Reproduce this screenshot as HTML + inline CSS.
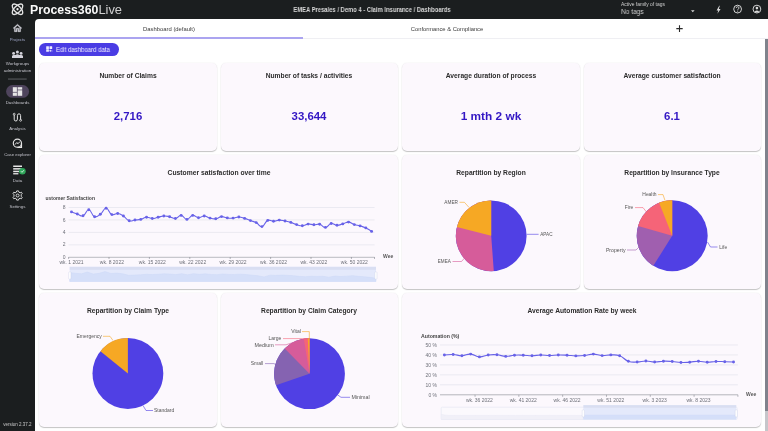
<!DOCTYPE html>
<html><head><meta charset="utf-8"><style>
html,body{margin:0;padding:0;}
body{width:768px;height:431px;overflow:hidden;position:relative;background:#1b1e1f;font-family:'Liberation Sans',sans-serif;}
.abs{position:absolute;}
.t{position:absolute;text-align:center;white-space:nowrap;line-height:1.1;}
.t,.abs{will-change:transform;}
.card{position:absolute;background:#fcf8fd;border-radius:5px;box-shadow:0 1px 1px 0 rgba(0,0,0,0.22),0 0 1.5px 0 rgba(0,0,0,0.10);}
svg text{font-family:'Liberation Sans',sans-serif;}
</style></head><body>

<svg class="abs" style="left:10px;top:2px" width="15" height="15" viewBox="0 0 15 15">
 <g fill="none" stroke="#e4e4e4" stroke-width="1.35">
  <ellipse cx="7.5" cy="7.25" rx="6.7" ry="3.2" transform="rotate(45 7.5 7.25)"/>
  <ellipse cx="7.5" cy="7.25" rx="6.7" ry="3.2" transform="rotate(-45 7.5 7.25)"/>
 </g>
 <circle cx="7.5" cy="7.25" r="1.15" fill="#f0f0f0"/>
</svg>
<div class="abs" style="left:30px;top:3.1px;font-size:12.3px;color:#fafafa;white-space:nowrap;line-height:14px"><b>Process360</b><span style="color:#cfcfcf;font-size:12.9px">Live</span></div>
<div class="t" style="left:222px;top:6.3px;width:300px;font-size:7.0px;color:#d8d8d8;font-weight:bold;transform:scaleX(0.835);transform-origin:150px 0">EMEA Presales / Demo 4 - Claim Insurance / Dashboards</div>
<div class="abs" style="left:620.8px;top:2.4px;font-size:4.95px;color:#cfcfcf;white-space:nowrap">Active family of tags</div>
<div class="abs" style="left:620.8px;top:7.0px;font-size:7.2px;color:#cfcfcf;white-space:nowrap;transform:scaleX(0.91);transform-origin:0 0">No tags</div>
<svg class="abs" style="left:690px;top:9px" width="8" height="5"><path d="M1.0,1.2 L4.6,1.2 L2.8,3.3Z" fill="#d8d8d8"/></svg>
<svg class="abs" style="left:714px;top:4px" width="50" height="12" viewBox="0 0 50 12">
 <path d="M5.2,1.8 L2.6,6.6 L4.3,6.6 L3.4,9.8 L6.6,4.9 L4.8,4.9 L5.8,1.8Z" fill="#dcdcdc"/>
 <circle cx="23.6" cy="5.1" r="3.9" fill="none" stroke="#dcdcdc" stroke-width="0.95"/>
 <path d="M22.2,4.1 Q22.2,2.7 23.6,2.7 Q25,2.7 25,4 Q25,4.9 23.7,5.6 L23.7,6.4" fill="none" stroke="#dcdcdc" stroke-width="0.85"/>
 <circle cx="23.7" cy="7.7" r="0.5" fill="#dcdcdc"/>
 <circle cx="42.9" cy="5.1" r="3.9" fill="none" stroke="#dcdcdc" stroke-width="0.95"/>
 <circle cx="42.9" cy="4.1" r="1.3" fill="#dcdcdc"/>
 <path d="M40.6,7.6 Q42.9,5.3 45.2,7.6 Q42.9,9.4 40.6,7.6Z" fill="#dcdcdc"/>
</svg>

<div class="side">
<svg class="abs" style="left:0;top:0" width="35" height="431" viewBox="0 0 35 431">
 <g fill="#e6e6e6">
  <!-- home -->
  <path transform="translate(12.2,22.9) scale(0.44)" d="M12 5.69l5 4.5V18h-2v-6H9v6H7v-7.81l5-4.5M12 3L2 12h3v8h6v-6h2v6h6v-8h3L12 3z" fill="#d2d2da" stroke="#d2d2da" stroke-width="0.9" stroke-linejoin="round"/>
  <!-- groups -->
  <circle cx="13.6" cy="53.4" r="1.45" fill="#d4d4dc"/><circle cx="17.4" cy="51.9" r="1.5" fill="#d4d4dc"/><circle cx="21.1" cy="53.4" r="1.45" fill="#d4d4dc"/>
  <path d="M12,58 L12,56.2 Q12,55 13.4,54.9 L15.6,54.9 Q16.2,54.3 17.4,54.2 Q18.6,54.3 19.2,54.9 L21.5,54.9 Q23,55 23,56.2 L23,58 Z" fill="#d4d4dc"/>
 </g>
 <rect x="8" y="78.6" width="18.7" height="0.9" fill="#65676c"/>
 <rect x="6.1" y="85.1" width="23" height="12.7" rx="6.35" fill="#4e445c"/>
 <g fill="#e6e6e6">
  <rect x="12.8" y="87.2" width="4.1" height="4.7"/><rect x="17.6" y="87.2" width="4.6" height="2.4"/>
  <rect x="12.8" y="92.6" width="4.1" height="3.2"/><rect x="17.6" y="90.3" width="4.6" height="5.5"/>
 </g>
 <!-- analysis -->
 <path d="M14.2,114.9 L14.2,119.2 Q14.2,121 15.8,121 Q17.4,121 17.4,119.2 L17.4,115.6 Q17.4,113.8 19,113.8 Q20.6,113.8 20.6,115.6 L20.6,119.6" fill="none" stroke="#e6e6e6" stroke-width="1.0"/>
 <circle cx="14.2" cy="114.2" r="0.95" fill="none" stroke="#e6e6e6" stroke-width="0.8"/><circle cx="20.6" cy="120.3" r="0.95" fill="none" stroke="#e6e6e6" stroke-width="0.8"/>
 <!-- case explorer -->
 <circle cx="17.4" cy="143.2" r="4.1" fill="none" stroke="#e6e6e6" stroke-width="1.15"/>
 <path d="M15.0,144.6 L16.7,142.6 L18.1,143.7 L19.9,141.6" fill="none" stroke="#e6e6e6" stroke-width="1.0"/>
 <path d="M17.4,147.3 L21.5,147.3 L21.5,143.2" fill="none" stroke="#e6e6e6" stroke-width="1.15"/>
 <!-- data -->
 <g fill="#e6e6e6">
  <rect x="13.2" y="165.5" width="8.8" height="1.5"/><rect x="13.2" y="168.1" width="8.8" height="1.5"/>
  <rect x="13.2" y="170.7" width="5.8" height="1.5"/><rect x="13.2" y="173.1" width="5.2" height="1.3"/>
 </g>
 <circle cx="22.4" cy="171.2" r="3.3" fill="#2fa65a"/>
 <path d="M20.9,171.2 L22.0,172.3 L23.9,170.2" fill="none" stroke="#fff" stroke-width="0.75"/>
 <!-- settings -->
 <g transform="translate(17.6,195.5)">
  <path d="M-0.9,-4.6 L0.9,-4.6 L1.3,-3.3 L2.5,-2.7 L3.8,-3.3 L4.6,-1.8 L3.6,-0.8 L3.6,0.8 L4.6,1.8 L3.8,3.3 L2.5,2.7 L1.3,3.3 L0.9,4.6 L-0.9,4.6 L-1.3,3.3 L-2.5,2.7 L-3.8,3.3 L-4.6,1.8 L-3.6,0.8 L-3.6,-0.8 L-4.6,-1.8 L-3.8,-3.3 L-2.5,-2.7 L-1.3,-3.3 Z" fill="none" stroke="#e6e6e6" stroke-width="0.9" stroke-linejoin="round"/>
  <circle r="1.5" fill="none" stroke="#e6e6e6" stroke-width="0.9"/>
 </g>
</svg>
<div class="t" style="left:0;top:38.3px;width:35px;font-size:4.3px;color:#a0a8c8">Projects</div>
<div class="t" style="left:0;top:60.9px;width:35px;font-size:4.4px;color:#c4c4cc;line-height:6.7px">Workgroups<br>administration</div>
<div class="t" style="left:0;top:100.8px;width:35px;font-size:4.4px;color:#c4c4cc">Dashboards</div>
<div class="t" style="left:0;top:127.2px;width:35px;font-size:4.4px;color:#c4c4cc">Analysis</div>
<div class="t" style="left:0;top:153.2px;width:35px;font-size:4.3px;color:#c4c4cc">Case explorer</div>
<div class="t" style="left:0;top:179.4px;width:35px;font-size:4.4px;color:#c4c4cc">Data</div>
<div class="t" style="left:0;top:205.0px;width:35px;font-size:4.4px;color:#c4c4cc">Settings</div>
<div class="t" style="left:0;top:423.2px;width:35px;font-size:4.5px;color:#c8c8c8">version 2.37.2</div>
</div>


<div class="abs" style="left:35px;top:19px;width:733px;height:412px;background:#fff;border-top-left-radius:4px"></div>
<div class="abs" style="left:35px;top:38px;width:733px;height:1px;background:#efeff3"></div>
<div class="abs" style="left:35px;top:37px;width:268px;height:2px;background:#aba4f0"></div>
<div class="t" style="left:69px;top:25.6px;width:200px;font-size:5.86px;color:#3a3a3a">Dashboard (default)</div>
<div class="t" style="left:346.5px;top:25.6px;width:200px;font-size:5.81px;color:#3a3a3a">Conformance &amp; Compliance</div>
<svg class="abs" style="left:675px;top:24px" width="9" height="9"><path d="M4.5,1.3 V7.9 M1.3,4.6 H7.7" stroke="#2a2a2a" stroke-width="1.1"/></svg>
<div class="abs" style="left:765px;top:39px;width:3px;height:372px;background:#80838c"></div>
<div class="abs" style="left:765px;top:411px;width:3px;height:20px;background:#c6c6ca"></div>
<div class="abs" style="left:39px;top:43px;width:80px;height:12.8px;border-radius:6.4px;background:#4a3ce4"></div>
<svg class="abs" style="left:45.8px;top:46px" width="7" height="7" viewBox="0 0 7 7" fill="#ecebff">
 <rect x="0.2" y="0.3" width="2.7" height="2.7" rx="0.3"/><rect x="3.5" y="0.3" width="2.7" height="2.7" rx="0.3"/>
 <rect x="0.2" y="3.3" width="2.7" height="2.5" rx="0.3"/><rect x="3.9" y="3.7" width="0.8" height="2.1"/><rect x="3.3" y="4.35" width="2.1" height="0.8"/><rect x="5.6" y="4.6" width="0.8" height="0.8"/>
</svg>
<div class="abs" style="left:56px;top:46.0px;font-size:6.5px;color:#f2f0ff;white-space:nowrap;transform:scaleX(0.925);transform-origin:0 0">Edit dashboard data</div>

<div class="card" style="left:39px;top:63px;width:177.5px;height:88px"></div><div class="card" style="left:220.5px;top:63px;width:177.5px;height:88px"></div><div class="card" style="left:402px;top:63px;width:177.5px;height:88px"></div><div class="card" style="left:583.5px;top:63px;width:177.5px;height:88px"></div><div class="card" style="left:39px;top:154.5px;width:359px;height:134.5px"></div><div class="card" style="left:402px;top:154.5px;width:177.5px;height:134.5px"></div><div class="card" style="left:583.5px;top:154.5px;width:177.5px;height:134.5px"></div><div class="card" style="left:39px;top:292.5px;width:177.5px;height:134.5px"></div><div class="card" style="left:220.5px;top:292.5px;width:177.5px;height:134.5px"></div><div class="card" style="left:402px;top:292.5px;width:359px;height:134.5px"></div>
<div class="t" style="left:-22.25px;top:71.64px;width:300px;font-size:6.7px;color:#2c2c2c;font-weight:bold;">Number of Claims</div><div class="t" style="left:-22.25px;top:109.58px;width:300px;font-size:11.4px;color:#3317c4;font-weight:bold;">2,716</div><div class="t" style="left:159.25px;top:71.64px;width:300px;font-size:6.7px;color:#2c2c2c;font-weight:bold;">Number of tasks / activities</div><div class="t" style="left:159.25px;top:109.58px;width:300px;font-size:11.4px;color:#3317c4;font-weight:bold;">33,644</div><div class="t" style="left:340.75px;top:71.64px;width:300px;font-size:6.7px;color:#2c2c2c;font-weight:bold;">Average duration of process</div><div class="t" style="left:340.75px;top:109.58px;width:300px;font-size:11.4px;color:#3317c4;font-weight:bold;transform:scaleX(1.04);transform-origin:150px 0">1 mth 2 wk</div><div class="t" style="left:522.25px;top:71.64px;width:300px;font-size:6.7px;color:#2c2c2c;font-weight:bold;">Average customer satisfaction</div><div class="t" style="left:522.25px;top:109.58px;width:300px;font-size:11.4px;color:#3317c4;font-weight:bold;">6.1</div><div class="t" style="left:68.5px;top:169.09px;width:300px;font-size:6.75px;color:#2c2c2c;font-weight:bold;">Customer satisfaction over time</div><div class="t" style="left:340.75px;top:169.14px;width:300px;font-size:6.7px;color:#2c2c2c;font-weight:bold;">Repartition by Region</div><div class="t" style="left:522.25px;top:169.14px;width:300px;font-size:6.7px;color:#2c2c2c;font-weight:bold;">Repartition by Insurance Type</div><div class="t" style="left:-22.25px;top:306.94px;width:300px;font-size:6.7px;color:#2c2c2c;font-weight:bold;">Repartition by Claim Type</div><div class="t" style="left:159.25px;top:306.94px;width:300px;font-size:6.7px;color:#2c2c2c;font-weight:bold;">Repartition by Claim Category</div><div class="t" style="left:431.5px;top:306.94px;width:300px;font-size:6.7px;color:#2c2c2c;font-weight:bold;">Average Automation Rate by week</div>
<svg class="abs" style="left:0;top:0" width="768" height="431" viewBox="0 0 768 431">
<circle cx="491.2" cy="235.8" r="35.4" fill="#5040e4"/><path d="M491.20,235.80 L493.79,271.10 A35.4,35.4 0 1 1 491.20,200.40 Z" fill="#d65c9a"/><path d="M491.20,235.80 L456.90,227.06 A35.4,35.4 0 0 1 491.20,200.40 Z" fill="#f6a824"/>
<polyline points="526.6,234.3 538.6,234.3" stroke="#5040e4" fill="none" stroke-width="0.6"/>
<text x="540.30" y="236.00" font-size="4.6" fill="#555" font-weight="normal" text-anchor="start" >APAC</text>
<polyline points="469,207.4 464.4,202.3 459.5,202.3" stroke="#f6a824" fill="none" stroke-width="0.6"/>
<text x="457.90" y="204.00" font-size="4.7" fill="#555" font-weight="normal" text-anchor="end" >AMER</text>
<polyline points="465,257.5 461.5,261.5 452.5,261.5" stroke="#d65c9a" fill="none" stroke-width="0.6"/>
<text x="450.80" y="263.20" font-size="4.6" fill="#555" font-weight="normal" text-anchor="end" >EMEA</text>
<circle cx="672.2" cy="235.8" r="35.5" fill="#5040e4"/><path d="M672.20,235.80 L653.34,265.87 A35.5,35.5 0 0 1 672.20,200.30 Z" fill="#a05faf"/><path d="M672.20,235.80 L638.08,226.01 A35.5,35.5 0 0 1 672.20,200.30 Z" fill="#f56478"/><path d="M672.20,235.80 L659.13,202.79 A35.5,35.5 0 0 1 672.20,200.30 Z" fill="#f6a824"/>
<polyline points="707.5,242 710.5,247 717.5,247" stroke="#5040e4" fill="none" stroke-width="0.6"/>
<text x="719.30" y="248.70" font-size="4.9" fill="#555" font-weight="normal" text-anchor="start" >Life</text>
<polyline points="640,246 636,250 627,250" stroke="#a05faf" fill="none" stroke-width="0.6"/>
<text x="625.50" y="251.70" font-size="5.2" fill="#555" font-weight="normal" text-anchor="end" >Property</text>
<polyline points="646.5,212 643,207.6 635,207.6" stroke="#f56478" fill="none" stroke-width="0.6"/>
<text x="633.30" y="209.30" font-size="4.9" fill="#555" font-weight="normal" text-anchor="end" >Fire</text>
<polyline points="665,200.5 663,194.6 658,194.6" stroke="#f6a824" fill="none" stroke-width="0.6"/>
<text x="656.50" y="196.30" font-size="4.9" fill="#555" font-weight="normal" text-anchor="end" >Health</text>
<circle cx="127.9" cy="373.5" r="35.4" fill="#5040e4"/><path d="M127.90,373.50 L100.43,351.17 A35.4,35.4 0 0 1 127.90,338.10 Z" fill="#f6a824"/>
<polyline points="143,405.5 146,410.5 153,410.5" stroke="#5040e4" fill="none" stroke-width="0.6"/>
<text x="154.00" y="412.20" font-size="5.0" fill="#555" font-weight="normal" text-anchor="start" >Standard</text>
<polyline points="113,340.5 110,336.3 103,336.3" stroke="#f6a824" fill="none" stroke-width="0.6"/>
<text x="101.80" y="338.00" font-size="5.0" fill="#555" font-weight="normal" text-anchor="end" >Emergency</text>
<circle cx="309.5" cy="373.7" r="35.4" fill="#5040e4"/><path d="M309.50,373.70 L276.03,385.23 A35.4,35.4 0 0 1 309.50,338.30 Z" fill="#8563b1"/><path d="M309.50,373.70 L284.73,348.41 A35.4,35.4 0 0 1 309.50,338.30 Z" fill="#d65c9a"/><path d="M309.50,373.70 L303.84,338.76 A35.4,35.4 0 0 1 309.50,338.30 Z" fill="#f56478"/><path d="M309.50,373.70 L307.77,338.34 A35.4,35.4 0 0 1 309.50,338.30 Z" fill="#f6a824"/>
<polyline points="335,393 341,397.3 350,397.3" stroke="#5040e4" fill="none" stroke-width="0.6"/>
<text x="351.40" y="399.00" font-size="5.3" fill="#555" font-weight="normal" text-anchor="start" >Minimal</text>
<polyline points="279,366.5 274,363.6 265,363.6" stroke="#8563b1" fill="none" stroke-width="0.6"/>
<text x="263.20" y="365.30" font-size="5.0" fill="#555" font-weight="normal" text-anchor="end" >Small</text>
<polyline points="296,341.5 286,344.8 275,344.8" stroke="#d65c9a" fill="none" stroke-width="0.6"/>
<text x="273.70" y="346.50" font-size="5.4" fill="#555" font-weight="normal" text-anchor="end" >Medium</text>
<polyline points="307.5,338.6 283,338.6" stroke="#f56478" fill="none" stroke-width="0.6"/>
<text x="281.30" y="340.30" font-size="5.0" fill="#555" font-weight="normal" text-anchor="end" >Large</text>
<polyline points="309.3,338.6 309.3,331.6 302,331.6" stroke="#f6a824" fill="none" stroke-width="0.6"/>
<text x="300.80" y="333.30" font-size="5.0" fill="#555" font-weight="normal" text-anchor="end" >Vital</text>
<line x1="68.6" y1="207.5" x2="374.5" y2="207.5" stroke="#e4e4ec" stroke-width="0.7"/>
<line x1="68.6" y1="219.95" x2="374.5" y2="219.95" stroke="#e4e4ec" stroke-width="0.7"/>
<line x1="68.6" y1="232.4" x2="374.5" y2="232.4" stroke="#e4e4ec" stroke-width="0.7"/>
<line x1="68.6" y1="244.85" x2="374.5" y2="244.85" stroke="#e4e4ec" stroke-width="0.7"/>
<line x1="68.6" y1="257.3" x2="374.5" y2="257.3" stroke="#85878f" stroke-width="0.55"/>
<text x="65.50" y="258.80" font-size="5.0" fill="#6e7079" font-weight="normal" text-anchor="end" >0</text>
<text x="65.50" y="246.38" font-size="5.0" fill="#6e7079" font-weight="normal" text-anchor="end" >2</text>
<text x="65.50" y="233.96" font-size="5.0" fill="#6e7079" font-weight="normal" text-anchor="end" >4</text>
<text x="65.50" y="221.54" font-size="5.0" fill="#6e7079" font-weight="normal" text-anchor="end" >6</text>
<text x="65.50" y="209.12" font-size="5.0" fill="#6e7079" font-weight="normal" text-anchor="end" >8</text>
<line x1="68.60" y1="257" x2="68.60" y2="259" stroke="#85878f" stroke-width="0.6"/>
<text x="71.49" y="263.80" font-size="5.0" fill="#6e7079" font-weight="normal" text-anchor="middle" >wk. 1 2021</text>
<line x1="109.00" y1="257" x2="109.00" y2="259" stroke="#85878f" stroke-width="0.6"/>
<text x="111.89" y="263.80" font-size="5.0" fill="#6e7079" font-weight="normal" text-anchor="middle" >wk. 8 2022</text>
<line x1="149.40" y1="257" x2="149.40" y2="259" stroke="#85878f" stroke-width="0.6"/>
<text x="152.29" y="263.80" font-size="5.0" fill="#6e7079" font-weight="normal" text-anchor="middle" >wk. 15 2022</text>
<line x1="189.81" y1="257" x2="189.81" y2="259" stroke="#85878f" stroke-width="0.6"/>
<text x="192.69" y="263.80" font-size="5.0" fill="#6e7079" font-weight="normal" text-anchor="middle" >wk. 22 2022</text>
<line x1="230.21" y1="257" x2="230.21" y2="259" stroke="#85878f" stroke-width="0.6"/>
<text x="233.09" y="263.80" font-size="5.0" fill="#6e7079" font-weight="normal" text-anchor="middle" >wk. 29 2022</text>
<line x1="270.61" y1="257" x2="270.61" y2="259" stroke="#85878f" stroke-width="0.6"/>
<text x="273.50" y="263.80" font-size="5.0" fill="#6e7079" font-weight="normal" text-anchor="middle" >wk. 36 2022</text>
<line x1="311.01" y1="257" x2="311.01" y2="259" stroke="#85878f" stroke-width="0.6"/>
<text x="313.90" y="263.80" font-size="5.0" fill="#6e7079" font-weight="normal" text-anchor="middle" >wk. 43 2022</text>
<line x1="351.41" y1="257" x2="351.41" y2="259" stroke="#85878f" stroke-width="0.6"/>
<text x="354.30" y="263.80" font-size="5.0" fill="#6e7079" font-weight="normal" text-anchor="middle" >wk. 50 2022</text>
<line x1="374.5" y1="257" x2="374.5" y2="259" stroke="#85878f" stroke-width="0.6"/>
<path d="M71.49,211.90 C71.49,211.90 74.35,213.02 77.26,214.00 C80.12,214.97 80.60,216.68 83.03,215.80 C86.37,214.58 86.03,209.58 88.80,209.80 C91.80,210.03 91.18,215.41 94.57,216.70 C96.95,217.61 97.85,216.02 100.34,214.20 C103.62,211.82 103.28,208.20 106.12,208.30 C109.05,208.40 108.47,213.06 111.89,214.60 C114.24,215.66 114.87,213.16 117.66,213.50 C120.64,213.86 120.80,214.34 123.43,216.00 C126.57,217.99 125.95,219.67 129.20,220.80 C131.73,221.67 132.08,220.35 134.97,220.00 C137.85,219.65 137.94,220.06 140.75,219.40 C143.71,218.71 143.57,217.53 146.52,217.30 C149.34,217.08 149.40,218.50 152.29,218.50 C155.18,218.50 155.18,217.92 158.06,217.30 C160.95,216.67 160.92,216.15 163.83,216.00 C166.69,215.85 166.78,216.09 169.60,216.70 C172.55,217.34 172.61,218.81 175.38,218.50 C178.38,218.16 178.36,215.18 181.15,215.40 C184.13,215.63 184.03,219.40 186.92,219.40 C189.81,219.40 189.63,215.85 192.69,215.40 C195.40,215.00 195.53,217.55 198.46,217.70 C201.30,217.85 201.38,215.90 204.23,216.00 C207.15,216.10 207.04,217.38 210.01,218.10 C212.81,218.78 212.98,219.16 215.78,218.80 C218.75,218.41 218.60,216.83 221.55,216.60 C224.37,216.38 224.40,217.52 227.32,217.90 C230.17,218.27 230.23,218.32 233.09,218.10 C236.00,217.87 235.99,216.93 238.87,217.00 C241.77,217.08 241.81,217.52 244.64,218.40 C247.58,219.32 247.51,219.54 250.41,220.60 C253.28,221.64 253.50,221.20 256.18,222.60 C259.27,224.20 259.34,227.10 261.95,226.60 C265.11,226.00 264.30,222.00 267.72,220.40 C270.08,219.30 270.62,221.27 273.50,221.20 C276.39,221.12 276.37,220.15 279.27,220.10 C282.14,220.05 282.18,220.43 285.04,221.00 C287.95,221.58 287.98,221.52 290.81,222.40 C293.75,223.32 293.62,223.75 296.58,224.60 C299.40,225.40 299.50,225.82 302.35,225.70 C305.27,225.57 305.20,224.33 308.13,224.10 C310.97,223.88 311.01,224.75 313.90,224.80 C316.78,224.85 316.96,223.69 319.67,224.30 C322.73,224.99 322.64,227.59 325.44,227.40 C328.41,227.19 328.12,224.09 331.21,223.50 C333.89,222.99 334.07,225.10 336.98,225.20 C339.85,225.30 339.90,224.67 342.76,223.90 C345.67,223.12 345.70,221.93 348.53,222.10 C351.47,222.28 351.32,223.62 354.30,224.60 C357.10,225.52 357.23,225.09 360.07,225.90 C363.00,226.74 363.10,226.59 365.84,227.90 C368.87,229.34 371.61,231.40 371.61,231.40" fill="none" stroke="#6862e8" stroke-width="1.1" stroke-linejoin="round"/>
<circle cx="71.49" cy="211.90" r="1.45" fill="#6862e8"/>
<circle cx="77.26" cy="214.00" r="1.45" fill="#6862e8"/>
<circle cx="83.03" cy="215.80" r="1.45" fill="#6862e8"/>
<circle cx="88.80" cy="209.80" r="1.45" fill="#6862e8"/>
<circle cx="94.57" cy="216.70" r="1.45" fill="#6862e8"/>
<circle cx="100.34" cy="214.20" r="1.45" fill="#6862e8"/>
<circle cx="106.12" cy="208.30" r="1.45" fill="#6862e8"/>
<circle cx="111.89" cy="214.60" r="1.45" fill="#6862e8"/>
<circle cx="117.66" cy="213.50" r="1.45" fill="#6862e8"/>
<circle cx="123.43" cy="216.00" r="1.45" fill="#6862e8"/>
<circle cx="129.20" cy="220.80" r="1.45" fill="#6862e8"/>
<circle cx="134.97" cy="220.00" r="1.45" fill="#6862e8"/>
<circle cx="140.75" cy="219.40" r="1.45" fill="#6862e8"/>
<circle cx="146.52" cy="217.30" r="1.45" fill="#6862e8"/>
<circle cx="152.29" cy="218.50" r="1.45" fill="#6862e8"/>
<circle cx="158.06" cy="217.30" r="1.45" fill="#6862e8"/>
<circle cx="163.83" cy="216.00" r="1.45" fill="#6862e8"/>
<circle cx="169.60" cy="216.70" r="1.45" fill="#6862e8"/>
<circle cx="175.38" cy="218.50" r="1.45" fill="#6862e8"/>
<circle cx="181.15" cy="215.40" r="1.45" fill="#6862e8"/>
<circle cx="186.92" cy="219.40" r="1.45" fill="#6862e8"/>
<circle cx="192.69" cy="215.40" r="1.45" fill="#6862e8"/>
<circle cx="198.46" cy="217.70" r="1.45" fill="#6862e8"/>
<circle cx="204.23" cy="216.00" r="1.45" fill="#6862e8"/>
<circle cx="210.01" cy="218.10" r="1.45" fill="#6862e8"/>
<circle cx="215.78" cy="218.80" r="1.45" fill="#6862e8"/>
<circle cx="221.55" cy="216.60" r="1.45" fill="#6862e8"/>
<circle cx="227.32" cy="217.90" r="1.45" fill="#6862e8"/>
<circle cx="233.09" cy="218.10" r="1.45" fill="#6862e8"/>
<circle cx="238.87" cy="217.00" r="1.45" fill="#6862e8"/>
<circle cx="244.64" cy="218.40" r="1.45" fill="#6862e8"/>
<circle cx="250.41" cy="220.60" r="1.45" fill="#6862e8"/>
<circle cx="256.18" cy="222.60" r="1.45" fill="#6862e8"/>
<circle cx="261.95" cy="226.60" r="1.45" fill="#6862e8"/>
<circle cx="267.72" cy="220.40" r="1.45" fill="#6862e8"/>
<circle cx="273.50" cy="221.20" r="1.45" fill="#6862e8"/>
<circle cx="279.27" cy="220.10" r="1.45" fill="#6862e8"/>
<circle cx="285.04" cy="221.00" r="1.45" fill="#6862e8"/>
<circle cx="290.81" cy="222.40" r="1.45" fill="#6862e8"/>
<circle cx="296.58" cy="224.60" r="1.45" fill="#6862e8"/>
<circle cx="302.35" cy="225.70" r="1.45" fill="#6862e8"/>
<circle cx="308.13" cy="224.10" r="1.45" fill="#6862e8"/>
<circle cx="313.90" cy="224.80" r="1.45" fill="#6862e8"/>
<circle cx="319.67" cy="224.30" r="1.45" fill="#6862e8"/>
<circle cx="325.44" cy="227.40" r="1.45" fill="#6862e8"/>
<circle cx="331.21" cy="223.50" r="1.45" fill="#6862e8"/>
<circle cx="336.98" cy="225.20" r="1.45" fill="#6862e8"/>
<circle cx="342.76" cy="223.90" r="1.45" fill="#6862e8"/>
<circle cx="348.53" cy="222.10" r="1.45" fill="#6862e8"/>
<circle cx="354.30" cy="224.60" r="1.45" fill="#6862e8"/>
<circle cx="360.07" cy="225.90" r="1.45" fill="#6862e8"/>
<circle cx="365.84" cy="227.90" r="1.45" fill="#6862e8"/>
<circle cx="371.61" cy="231.40" r="1.45" fill="#6862e8"/>
<text x="45.50" y="200.20" font-size="5.0" fill="#464646" font-weight="bold" text-anchor="start" >ustomer Satisfaction</text>
<text x="383.00" y="258.20" font-size="5.0" fill="#5a5a5a" font-weight="bold" text-anchor="start" >Wee</text>
<rect x="69.7" y="266.8" width="306.3" height="14.699999999999989" fill="#e4e9fb"/>
<polygon points="69.7,281.5 69.70,272.64 75.59,273.26 81.48,273.79 87.37,272.03 93.26,274.05 99.15,273.32 105.04,271.59 110.93,273.43 116.82,273.11 122.71,273.84 128.60,275.25 134.49,275.02 140.38,274.84 146.28,274.22 152.17,274.58 158.06,274.22 163.95,273.84 169.84,274.05 175.73,274.58 181.62,273.67 187.51,274.84 193.40,273.67 199.29,274.34 205.18,273.84 211.07,274.46 216.96,274.66 222.85,274.02 228.74,274.40 234.63,274.46 240.52,274.14 246.41,274.55 252.30,275.19 258.19,275.78 264.08,276.95 269.97,275.13 275.86,275.37 281.75,275.05 287.64,275.31 293.53,275.72 299.43,276.36 305.32,276.69 311.21,276.22 317.10,276.42 322.99,276.28 328.88,277.18 334.77,276.04 340.66,276.54 346.55,276.16 352.44,275.63 358.33,276.36 364.22,276.74 370.11,277.33 376.00,278.36 376,281.5" fill="#d5dff9" stroke="#cdd8f6" stroke-width="0.5"/>
<rect x="69.7" y="266.8" width="306.3" height="3" fill="#d9def2"/>
<rect x="68.7" y="271.8" width="2.2" height="7.4" rx="0.9" fill="#fff" stroke="#c4cbe4" stroke-width="0.35"/>
<rect x="374.8" y="271.8" width="2.2" height="7.4" rx="0.9" fill="#fff" stroke="#c4cbe4" stroke-width="0.35"/>
<line x1="440.0" y1="345.0" x2="737.9" y2="345.0" stroke="#e4e4ec" stroke-width="0.7"/>
<line x1="440.0" y1="354.95" x2="737.9" y2="354.95" stroke="#e4e4ec" stroke-width="0.7"/>
<line x1="440.0" y1="364.9" x2="737.9" y2="364.9" stroke="#e4e4ec" stroke-width="0.7"/>
<line x1="440.0" y1="374.85" x2="737.9" y2="374.85" stroke="#e4e4ec" stroke-width="0.7"/>
<line x1="440.0" y1="384.8" x2="737.9" y2="384.8" stroke="#e4e4ec" stroke-width="0.7"/>
<line x1="440.0" y1="394.8" x2="737.9" y2="394.8" stroke="#85878f" stroke-width="0.6"/>
<text x="437.00" y="396.60" font-size="5.0" fill="#6e7079" font-weight="normal" text-anchor="end" >0 %</text>
<text x="437.00" y="386.64" font-size="5.0" fill="#6e7079" font-weight="normal" text-anchor="end" >10 %</text>
<text x="437.00" y="376.68" font-size="5.0" fill="#6e7079" font-weight="normal" text-anchor="end" >20 %</text>
<text x="437.00" y="366.72" font-size="5.0" fill="#6e7079" font-weight="normal" text-anchor="end" >30 %</text>
<text x="437.00" y="356.76" font-size="5.0" fill="#6e7079" font-weight="normal" text-anchor="end" >40 %</text>
<text x="437.00" y="346.80" font-size="5.0" fill="#6e7079" font-weight="normal" text-anchor="end" >50 %</text>
<line x1="475.05" y1="394.8" x2="475.05" y2="396.8" stroke="#85878f" stroke-width="0.6"/>
<text x="479.43" y="401.60" font-size="5.0" fill="#6e7079" font-weight="normal" text-anchor="middle" >wk. 36 2022</text>
<line x1="518.86" y1="394.8" x2="518.86" y2="396.8" stroke="#85878f" stroke-width="0.6"/>
<text x="523.24" y="401.60" font-size="5.0" fill="#6e7079" font-weight="normal" text-anchor="middle" >wk. 41 2022</text>
<line x1="562.66" y1="394.8" x2="562.66" y2="396.8" stroke="#85878f" stroke-width="0.6"/>
<text x="567.05" y="401.60" font-size="5.0" fill="#6e7079" font-weight="normal" text-anchor="middle" >wk. 46 2022</text>
<line x1="606.47" y1="394.8" x2="606.47" y2="396.8" stroke="#85878f" stroke-width="0.6"/>
<text x="610.85" y="401.60" font-size="5.0" fill="#6e7079" font-weight="normal" text-anchor="middle" >wk. 51 2022</text>
<line x1="650.28" y1="394.8" x2="650.28" y2="396.8" stroke="#85878f" stroke-width="0.6"/>
<text x="654.66" y="401.60" font-size="5.0" fill="#6e7079" font-weight="normal" text-anchor="middle" >wk. 3 2023</text>
<line x1="694.09" y1="394.8" x2="694.09" y2="396.8" stroke="#85878f" stroke-width="0.6"/>
<text x="698.47" y="401.60" font-size="5.0" fill="#6e7079" font-weight="normal" text-anchor="middle" >wk. 8 2023</text>
<line x1="737.9" y1="394.8" x2="737.9" y2="396.8" stroke="#85878f" stroke-width="0.6"/>
<path d="M444.38,355.00 C444.38,355.00 448.78,354.33 453.14,354.50 C457.54,354.68 457.54,355.80 461.90,355.70 C466.30,355.60 466.36,353.80 470.67,354.10 C475.12,354.40 474.99,356.67 479.43,356.90 C483.75,357.12 483.76,355.53 488.19,355.00 C492.52,354.48 492.61,354.45 496.95,354.80 C501.37,355.15 501.32,356.30 505.71,356.40 C510.08,356.50 510.07,355.50 514.48,355.20 C518.84,354.90 518.86,355.08 523.24,355.20 C527.62,355.33 527.62,355.75 532.00,355.70 C536.38,355.65 536.38,355.05 540.76,355.00 C545.14,354.95 545.14,355.50 549.52,355.50 C553.90,355.50 553.90,355.08 558.28,355.00 C562.66,354.93 562.67,354.98 567.05,355.20 C571.43,355.43 571.42,355.82 575.81,355.90 C580.18,355.97 580.21,355.95 584.57,355.50 C588.98,355.05 588.95,354.08 593.33,354.10 C597.72,354.13 597.69,355.40 602.09,355.60 C606.45,355.80 606.48,354.85 610.85,354.90 C615.24,354.95 615.58,354.35 619.62,355.80 C624.34,357.50 623.65,359.53 628.38,361.20 C632.42,362.63 632.76,362.05 637.14,362.00 C641.53,361.95 641.52,361.00 645.90,361.00 C650.28,361.00 650.28,361.95 654.66,362.00 C659.04,362.05 659.04,361.33 663.42,361.20 C667.80,361.08 667.82,361.18 672.19,361.50 C676.58,361.83 676.55,362.32 680.95,362.50 C685.32,362.67 685.34,362.52 689.71,362.20 C694.10,361.87 694.09,361.20 698.47,361.20 C702.85,361.20 702.85,362.12 707.23,362.20 C711.61,362.27 711.61,361.63 716.00,361.50 C720.37,361.38 720.38,361.58 724.76,361.70 C729.14,361.83 733.52,362.00 733.52,362.00" fill="none" stroke="#6862e8" stroke-width="1.1" stroke-linejoin="round"/>
<circle cx="444.38" cy="355.00" r="1.45" fill="#6862e8"/>
<circle cx="453.14" cy="354.50" r="1.45" fill="#6862e8"/>
<circle cx="461.90" cy="355.70" r="1.45" fill="#6862e8"/>
<circle cx="470.67" cy="354.10" r="1.45" fill="#6862e8"/>
<circle cx="479.43" cy="356.90" r="1.45" fill="#6862e8"/>
<circle cx="488.19" cy="355.00" r="1.45" fill="#6862e8"/>
<circle cx="496.95" cy="354.80" r="1.45" fill="#6862e8"/>
<circle cx="505.71" cy="356.40" r="1.45" fill="#6862e8"/>
<circle cx="514.48" cy="355.20" r="1.45" fill="#6862e8"/>
<circle cx="523.24" cy="355.20" r="1.45" fill="#6862e8"/>
<circle cx="532.00" cy="355.70" r="1.45" fill="#6862e8"/>
<circle cx="540.76" cy="355.00" r="1.45" fill="#6862e8"/>
<circle cx="549.52" cy="355.50" r="1.45" fill="#6862e8"/>
<circle cx="558.28" cy="355.00" r="1.45" fill="#6862e8"/>
<circle cx="567.05" cy="355.20" r="1.45" fill="#6862e8"/>
<circle cx="575.81" cy="355.90" r="1.45" fill="#6862e8"/>
<circle cx="584.57" cy="355.50" r="1.45" fill="#6862e8"/>
<circle cx="593.33" cy="354.10" r="1.45" fill="#6862e8"/>
<circle cx="602.09" cy="355.60" r="1.45" fill="#6862e8"/>
<circle cx="610.85" cy="354.90" r="1.45" fill="#6862e8"/>
<circle cx="619.62" cy="355.80" r="1.45" fill="#6862e8"/>
<circle cx="628.38" cy="361.20" r="1.45" fill="#6862e8"/>
<circle cx="637.14" cy="362.00" r="1.45" fill="#6862e8"/>
<circle cx="645.90" cy="361.00" r="1.45" fill="#6862e8"/>
<circle cx="654.66" cy="362.00" r="1.45" fill="#6862e8"/>
<circle cx="663.42" cy="361.20" r="1.45" fill="#6862e8"/>
<circle cx="672.19" cy="361.50" r="1.45" fill="#6862e8"/>
<circle cx="680.95" cy="362.50" r="1.45" fill="#6862e8"/>
<circle cx="689.71" cy="362.20" r="1.45" fill="#6862e8"/>
<circle cx="698.47" cy="361.20" r="1.45" fill="#6862e8"/>
<circle cx="707.23" cy="362.20" r="1.45" fill="#6862e8"/>
<circle cx="716.00" cy="361.50" r="1.45" fill="#6862e8"/>
<circle cx="724.76" cy="361.70" r="1.45" fill="#6862e8"/>
<circle cx="733.52" cy="362.00" r="1.45" fill="#6862e8"/>
<text x="421.00" y="338.00" font-size="5.2" fill="#464646" font-weight="bold" text-anchor="start" >Automation (%)</text>
<text x="746.00" y="396.00" font-size="5.0" fill="#5a5a5a" font-weight="bold" text-anchor="start" >Wee</text>
<rect x="441.2" y="407.2" width="296" height="12.3" rx="1" fill="#fbf9fd" stroke="#e2e5f1" stroke-width="0.6"/>
<polygon points="441.2,419.5 441.20,414.50 448.00,415.4 454.76,415.4 461.53,415.4 468.30,415.4 475.06,415.4 481.82,415.4 488.59,415.4 495.35,415.4 502.12,415.4 508.88,415.4 515.65,415.4 522.41,415.4 529.18,415.4 535.94,415.4 542.71,415.4 549.47,415.4 556.24,415.4 563.00,415.4 569.77,415.4 576.53,415.4 583.30,415.4 583.3,419.5" fill="#f1f0f8" stroke="#e9e9f4" stroke-width="0.5"/>
<rect x="583.3" y="407.8" width="153" height="11.7" fill="#e4e9fb"/>
<rect x="583.3" y="415.2" width="153" height="4.3" fill="#d5dff9"/>
<line x1="583.3" y1="415.2" x2="736.3" y2="415.2" stroke="#cdd8f6" stroke-width="0.5"/>
<rect x="583.3" y="405.1" width="153" height="2.7" fill="#d9def2"/>
<rect x="582.2" y="409.8" width="2.2" height="7.2" rx="0.9" fill="#fff" stroke="#c4cbe4" stroke-width="0.35"/>
<rect x="735.2" y="409.8" width="2.2" height="7.2" rx="0.9" fill="#fff" stroke="#c4cbe4" stroke-width="0.35"/>
</svg>
</body></html>
